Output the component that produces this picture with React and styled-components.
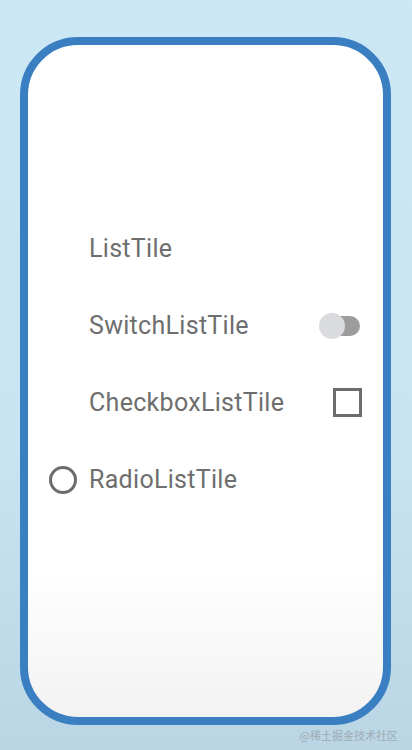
import React from "react";
import styled, { createGlobalStyle } from "styled-components";

const GlobalStyle = createGlobalStyle`
  html, body {
    margin: 0;
    padding: 0;
  }
  body {
    font-family: Roboto, "Noto Sans", sans-serif;
  }
  * {
    box-sizing: border-box;
  }
`;

const Page = styled.div`
  width: 412px;
  height: 750px;
  overflow: hidden;
  display: flex;
  flex-direction: column;
  padding: 37px 21px 0 20px;
  background: linear-gradient(180deg, #cde8f5 0%, #c8e3f1 60%, #bad6e4 100%);
`;

const Phone = styled.div`
  height: 688px;
  border: 8px solid #3a7fc2;
  border-radius: 58px;
  background: linear-gradient(180deg, #ffffff 0%, #ffffff 78%, #f2f2f2 100%);
  display: flex;
  flex-direction: column;
  padding: 165px 21px 0 21px;
`;

const Tile = styled.div`
  height: 77px;
  display: flex;
  align-items: center;
`;

const Leading = styled.div`
  width: 40px;
  display: flex;
  align-items: center;
`;

const Title = styled.span`
  flex: 1;
  font-size: 25px;
  line-height: 28px;
  letter-spacing: 0.3px;
  color: #6e6e6e;
`;

const Trailing = styled.div`
  display: flex;
  align-items: center;
  justify-content: flex-end;
`;

const Footer = styled.div`
  display: flex;
  justify-content: flex-end;
  padding: 3px 0 0 0;
  margin-right: -7px;
`;

const Watermark = styled.span`
  font-family: "Noto Sans CJK SC", sans-serif;
  font-size: 11px;
  line-height: 14px;
  color: #9eacb5;
`;

const Switch = () => (
  <svg width="41" height="28" viewBox="0 0 41 28" style={{ marginRight: 2 }}>
    <rect x="3" y="4" width="38" height="20" rx="10" fill="#9c9c9c" />
    <circle cx="13" cy="14" r="13" fill="#dadbde" />
  </svg>
);

const Checkbox = () => (
  <svg width="29" height="29" viewBox="0 0 29 29">
    <rect x="1.5" y="1.5" width="26" height="26" fill="none" stroke="#6c6c6c" strokeWidth="3" />
  </svg>
);

const Radio = () => (
  <svg width="28" height="28" viewBox="0 0 28 28">
    <circle cx="14" cy="14" r="12.5" fill="none" stroke="#6c6c6c" strokeWidth="3" />
  </svg>
);

const tiles = [
  { title: "ListTile" },
  { title: "SwitchListTile", trailing: <Switch /> },
  { title: "CheckboxListTile", trailing: <Checkbox /> },
  { title: "RadioListTile", leading: <Radio /> },
];

export default function App() {
  return (
    <>
      <GlobalStyle />
      <Page>
        <Phone>
          {tiles.map((t) => (
            <Tile key={t.title}>
              <Leading>{t.leading}</Leading>
              <Title>{t.title}</Title>
              <Trailing>{t.trailing}</Trailing>
            </Tile>
          ))}
        </Phone>
        <Footer>
          <Watermark>@稀土掘金技术社区</Watermark>
        </Footer>
      </Page>
    </>
  );
}
